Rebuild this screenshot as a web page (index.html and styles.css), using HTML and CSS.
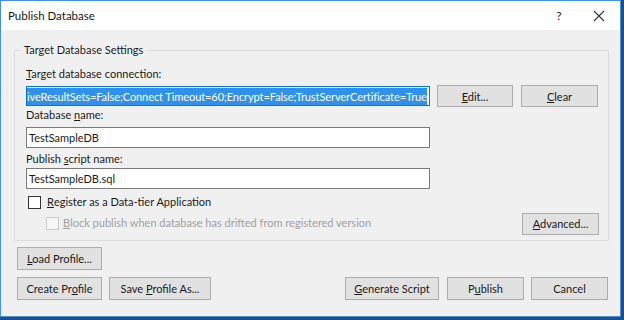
FILE: index.html
```html
<!DOCTYPE html>
<html lang="en">
<head>
  <meta charset="UTF-8">
  <title>Publish Database</title>
  <link rel="stylesheet" href="styles.css">
</head>
<body>
  <div class="window">
    <div class="titlebar">
      <span class="title">Publish Database</span>
      <span class="help">?</span>
      <span class="close">
        <svg width="12" height="12" viewBox="0 0 12 12"><path d="M1 1 L11 11 M11 1 L1 11" stroke="#333" stroke-width="1.1" fill="none"/></svg>
      </span>
    </div>
    <div class="main">
      <fieldset class="group">
        <legend>Target Database Settings</legend>
        <div class="group-body">
          <div class="label"><u>T</u>arget database connection:</div>
          <div class="row">
            <div class="textbox selected"><span class="sel">iveResultSets=False;Connect Timeout=60;Encrypt=False;TrustServerCertificate=True</span></div>
            <button class="btn edit"><u>E</u>dit...</button>
            <button class="btn clear"><u>C</u>lear</button>
          </div>
          <div class="label">Database <u>n</u>ame:</div>
          <div class="textbox">TestSampleDB</div>
          <div class="label second">Publish <u>s</u>cript name:</div>
          <div class="textbox">TestSampleDB.sql</div>
          <label class="check first-check"><span class="box"></span><u>R</u>egister as a Data-tier Application</label>
          <div class="row check-row">
            <label class="check disabled"><span class="box"></span><u>B</u>lock publish when database has drifted from registered version</label>
            <button class="btn advanced"><u>A</u>dvanced...</button>
          </div>
        </div>
      </fieldset>
      <div class="btn-row load-row">
        <button class="btn load"><u>L</u>oad Profile...</button>
      </div>
      <div class="btn-row bottom-row">
        <button class="btn create">Create Pr<u>o</u>file</button>
        <button class="btn save">Save <u>P</u>rofile As...</button>
        <span class="spacer"></span>
        <button class="btn generate"><u>G</u>enerate Script</button>
        <button class="btn publish">P<u>u</u>blish</button>
        <button class="btn cancel">Cancel</button>
      </div>
    </div>
  </div>
</body>
</html>
```

FILE: styles.css
```css
* { box-sizing: border-box; margin: 0; padding: 0; }
body {
  background: #1d4f8c;
  font-family: Lato, "Open Sans", sans-serif;
  font-size: 11px;
  color: #1a1a1a;
  width: 624px;
  height: 320px;
  overflow: hidden;
}
u { text-decoration: underline; text-underline-offset: 1px; }
.window {
  width: 621px;
  height: 317px;
  border: 1px solid #4b8fd6;
  background: #f0f0f0;
  display: flex;
  flex-direction: column;
}
.titlebar {
  height: 29px;
  background: #ffffff;
  display: flex;
  align-items: center;
  padding-left: 7px;
}
.title { flex: 1; font-size: 11.5px; }
.help { width: 40px; text-align: center; font-size: 12px; }
.close { width: 40px; display: flex; justify-content: center; margin-right: 1px; }
.main {
  flex: 1;
  padding: 12px 12px 0 16px;
}
.group {
  border: 1px solid #dcdcdc;
  margin: 0 -1px 0 -3px;
}
.group legend {
  margin-left: 6px;
  padding: 0 3px;
  line-height: 16px;
}
.group-body {
  padding: 8px 9px 6px 11px;
  display: flex;
  flex-direction: column;
}
.label { line-height: 16px; }
.label.second { margin-top: 3px; }
.row {
  display: flex;
  align-items: center;
  height: 22px;
  margin-top: 3px;
}
.textbox {
  height: 21px;
  width: 404px;
  background: #ffffff;
  border: 1px solid #7a7a7a;
  padding: 0 2px;
  line-height: 19px;
  white-space: nowrap;
  overflow: hidden;
}
.label + .textbox { margin-top: 4px; }
.label.second + .textbox { margin-top: 1px; }
.textbox.selected {
  height: 20px;
  border-color: #0078d7;
  padding: 1px 0 0 0;
  line-height: 17px;
}
.sel {
  background: #3390e8;
  color: #ffffff;
  display: inline-block;
  letter-spacing: -0.08px;
}
.btn {
  font: inherit;
  color: #1a1a1a;
  background: #e1e1e1;
  border: 1px solid #adadad;
  height: 23px;
}
.edit { width: 76px; height: 22px; margin-left: 7px; }
.clear { width: 77px; height: 22px; margin-left: 8px; }
.check {
  display: flex;
  align-items: center;
  line-height: 16px;
}
.check .box {
  width: 13px;
  height: 13px;
  border: 1px solid #333333;
  background: #ffffff;
  margin-right: 6px;
}
.first-check { margin: 5px 0 0 2px; }
.check-row { margin-top: 2px; justify-content: space-between; }
.check.disabled { color: #a0a0a0; margin-left: 20px; }
.check.disabled .box { border-color: #cccccc; background: #f7f7f7; margin-right: 4px; }
.advanced { width: 77px; height: 22px; margin-top: 1px; }
.btn-row { display: flex; }
.load-row { margin-top: 6px; }
.bottom-row { margin-top: 7px; gap: 7px; }
.spacer { flex: 1; }
.load, .create { width: 85px; }
.save { width: 102px; }
.generate { width: 94px; margin-right: 1px; }
.publish, .cancel { width: 77px; }
```
